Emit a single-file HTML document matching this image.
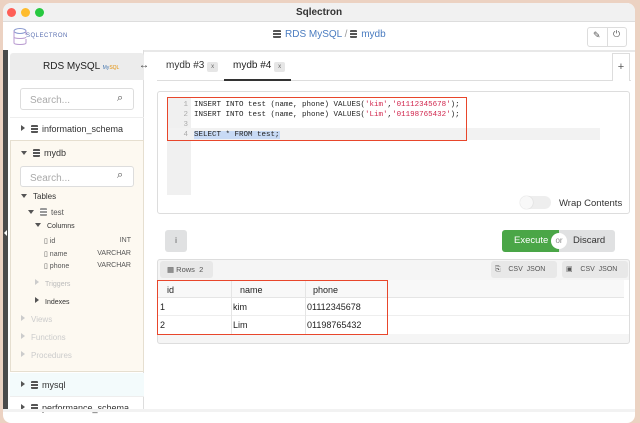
<!DOCTYPE html>
<html><head><meta charset="utf-8"><style>
*{box-sizing:border-box;margin:0;padding:0}
body{width:640px;height:412px;overflow:hidden;background:#ecd2c2;font-family:"Liberation Sans",sans-serif;position:relative;font-size:9px;color:#333}
.a{position:absolute}
.mono{font-family:"Liberation Mono",monospace}
.tri{display:inline-block;width:0;height:0;border-left:4px solid #555;border-top:3px solid transparent;border-bottom:3px solid transparent;margin-right:6px;vertical-align:1px}
.trid{display:inline-block;width:0;height:0;border-top:4px solid #555;border-left:3px solid transparent;border-right:3px solid transparent;margin-right:6px;vertical-align:1px}
.db{display:inline-block;width:7px;height:8px;border-top:2px solid #555;border-bottom:2px solid #555;background:linear-gradient(#fff 0 1px,#555 1px 3px,#fff 3px);border-radius:1px;margin-right:4px;vertical-align:-1px}
.srch{background:#fff;border:1px solid #ddd;border-radius:3px;color:#aaa;font-size:10px;padding:6px 9px}
.btn{background:#e0e1e2;border-radius:3px}
</style></head><body>
<div class="a" style="left:3px;top:3px;width:632px;height:420px;background:#fff;border-radius:8px;overflow:hidden">
 <div class="a" style="left:0;top:0;width:632px;height:19px;background:#f1f1f1;border-bottom:1px solid #ddd"></div>
 <div class="a" style="left:4px;top:5px;width:9px;height:9px;border-radius:50%;background:#fe5f57"></div>
 <div class="a" style="left:18px;top:5px;width:9px;height:9px;border-radius:50%;background:#febc2e"></div>
 <div class="a" style="left:32px;top:5px;width:9px;height:9px;border-radius:50%;background:#28c840"></div>
 <div class="a" style="left:0;top:4px;width:632px;text-align:center;font-weight:bold;font-size:10px;color:#333">Sqlectron</div>
 <div class="a" style="left:0;top:20px;width:632px;height:29px;background:#fff;border-bottom:2px solid #e8e8e8"></div>
</div>
<svg class="a" style="left:12px;top:27px" width="16" height="20"><ellipse cx="8" cy="4" rx="6" ry="2.5" fill="none" stroke="#8a9ad0"/><path d="M2 4v12M14 4v4M2 10c0 2 12 2 12 0M2 16c0 2 12 2 12 0v-4" fill="none" stroke="#b89ad0"/></svg>
<div class="a" style="left:26px;top:33px;font-size:6px;color:#5a6fb0;letter-spacing:.5px">SQLECTRON</div>
<div class="a" style="left:273px;top:29px;font-size:10px;color:#4a7cc0"><span class="db" style="width:8px"></span>RDS MySQL <span style="color:#999">/</span> <span class="db"></span>mydb</div>
<div class="a" style="left:587px;top:27px;width:40px;height:20px;border:1px solid #ddd;border-radius:3px;background:#fff"></div>
<div class="a" style="left:607px;top:27px;width:1px;height:20px;background:#ddd"></div>
<div class="a" style="left:593px;top:30px;font-size:9px;color:#555">✎</div>
<div class="a" style="left:613px;top:29px;font-size:9px;color:#555">⏻</div>
<div class="a" style="left:3px;top:50px;width:5px;height:362px;background:#4a4a4a"></div>
<div class="a" style="left:4px;top:230px;width:0;height:0;border-right:3px solid #fff;border-top:3px solid transparent;border-bottom:3px solid transparent"></div>
<div class="a" style="left:8px;top:50px;width:136px;height:362px;background:#fff;border-right:1px solid #ddd"></div>
<div class="a" style="left:10px;top:53px;width:134px;height:27px;background:#ececec;border-radius:3px 3px 0 0"></div>
<div class="a" style="left:43px;top:61px;font-size:10px;color:#222">RDS MySQL <span style="font-size:5px;color:#4b7ab0">My<span style="color:#e48e00">SQL</span></span></div>
<div class="a" style="left:139px;top:60px;font-size:10px">↔</div>
<div class="a srch" style="left:20px;top:88px;width:114px;height:22px">Search...</div>
<div class="a" style="left:117px;top:92px;font-size:11px;color:#555">⌕</div>
<div class="a" style="left:10px;top:117px;width:134px;height:23px;border-top:1px solid #eee"></div>
<div class="a" style="left:21px;top:124px;font-size:9px"><span class="tri"></span><span class="db"></span>information_schema</div>
<div class="a" style="left:10px;top:140px;width:134px;height:232px;background:#fdf9f1;border:1px solid #e6dfd0"></div>
<div class="a" style="left:21px;top:148px;font-size:9px"><span class="trid"></span><span class="db"></span>mydb</div>
<div class="a srch" style="left:20px;top:166px;width:114px;height:21px">Search...</div>
<div class="a" style="left:117px;top:169px;font-size:11px;color:#555">⌕</div>
<div class="a" style="left:21px;top:192px;font-size:8px"><span class="trid"></span>Tables</div>
<div class="a" style="left:28px;top:208px;font-size:8px;color:#555"><span class="trid"></span><span class="db" style="border-color:#999;background:linear-gradient(#fff 0 1px,#999 1px 3px,#fff 3px)"></span>test</div>
<div class="a" style="left:35px;top:223px;font-size:7px"><span class="trid"></span>Columns</div>
<div class="a" style="left:44px;top:237px;font-size:7px;color:#555;width:87px">▯ id<span style="float:right">INT</span></div>
<div class="a" style="left:44px;top:250px;font-size:7px;color:#555;width:87px">▯ name<span style="float:right">VARCHAR</span></div>
<div class="a" style="left:44px;top:262px;font-size:7px;color:#555;width:87px">▯ phone<span style="float:right">VARCHAR</span></div>
<div class="a" style="left:35px;top:279px;font-size:7px;color:#bbb"><span class="tri" style="border-left-color:#ccc"></span>Triggers</div>
<div class="a" style="left:35px;top:297px;font-size:7px"><span class="tri"></span>Indexes</div>
<div class="a" style="left:21px;top:315px;font-size:8px;color:#ccc"><span class="tri" style="border-left-color:#ccc"></span>Views</div>
<div class="a" style="left:21px;top:333px;font-size:8px;color:#ccc"><span class="tri" style="border-left-color:#ccc"></span>Functions</div>
<div class="a" style="left:21px;top:351px;font-size:8px;color:#ccc"><span class="tri" style="border-left-color:#ccc"></span>Procedures</div>
<div class="a" style="left:10px;top:373px;width:134px;height:24px;background:#f3fbfc;border-bottom:1px solid #eee"></div>
<div class="a" style="left:21px;top:380px;font-size:9px"><span class="tri"></span><span class="db"></span>mysql</div>
<div class="a" style="left:21px;top:403px;font-size:9px"><span class="tri"></span><span class="db"></span>performance_schema</div>
<div class="a" style="left:157px;top:80px;width:474px;height:1px;background:#ddd"></div>
<div class="a" style="left:166px;top:60px;font-size:10px;color:#333">mydb #3 <span style="display:inline-block;background:#e6e6e6;border-radius:2px;width:11px;height:10px;font-size:6px;text-align:center;line-height:10px;color:#666">x</span></div>
<div class="a" style="left:233px;top:60px;font-size:10px;color:#222">mydb #4 <span style="display:inline-block;background:#e6e6e6;border-radius:2px;width:11px;height:10px;font-size:6px;text-align:center;line-height:10px;color:#666">x</span></div>
<div class="a" style="left:224px;top:79px;width:67px;height:2px;background:#333"></div>
<div class="a" style="left:612px;top:53px;width:18px;height:28px;border:1px solid #ddd;border-bottom:none;background:#fff;text-align:center;line-height:26px;font-size:11px;color:#555">+</div>
<div class="a" style="left:157px;top:91px;width:473px;height:123px;border:1px solid #ddd;border-radius:3px;background:#fff"></div>
<div class="a" style="left:167px;top:97px;width:24px;height:98px;background:#f0f0f0"></div>
<div class="a" style="left:167px;top:128px;width:433px;height:12px;background:#f2f2f2"></div>
<div class="a mono" style="left:168px;top:100px;width:20px;text-align:right;font-size:7.5px;line-height:10px;color:#aaa">1<br>2<br>3<br>4</div>
<div class="a mono" style="left:194px;top:100px;font-size:7.5px;line-height:10px;color:#222;white-space:pre">INSERT INTO test (name, phone) VALUES(<span style="color:#d0234b">'kim'</span>,<span style="color:#d0234b">'01112345678'</span>);
INSERT INTO test (name, phone) VALUES(<span style="color:#d0234b">'Lim'</span>,<span style="color:#d0234b">'01198765432'</span>);

<span style="background:#c8daf5">SELECT * FROM test;</span></div>
<div class="a" style="left:167px;top:97px;width:300px;height:44px;border:1.5px solid #e8462b"></div>
<div class="a" style="left:520px;top:196px;width:31px;height:13px;border-radius:7px;background:#eee"></div>
<div class="a" style="left:520px;top:196px;width:13px;height:13px;border-radius:50%;background:#f8f8f8;box-shadow:0 0 1px #bbb"></div>
<div class="a" style="left:559px;top:198px;font-size:9.5px;color:#333">Wrap Contents</div>
<div class="a btn" style="left:165px;top:230px;width:22px;height:22px;text-align:center;line-height:22px;font-size:8px;color:#555">i</div>
<div class="a" style="left:502px;top:230px;width:60px;height:22px;background:#4aa647;border-radius:3px 0 0 3px;color:#fff;font-size:9.5px;line-height:22px;padding-left:12px">Execute</div>
<div class="a btn" style="left:559px;top:230px;width:56px;height:22px;border-radius:0 3px 3px 0;font-size:9.5px;line-height:22px;padding-left:14px;color:#333">Discard</div>
<div class="a" style="left:551px;top:233px;width:16px;height:16px;border-radius:50%;background:#fff;font-size:8px;color:#888;text-align:center;line-height:16px">or</div>
<div class="a" style="left:157px;top:259px;width:473px;height:85px;border:1px solid #ddd;border-radius:3px;background:#f5f5f5"></div>
<div class="a btn" style="left:160px;top:261px;width:53px;height:17px;background:#e8e8e8;font-size:7.5px;color:#555;line-height:17px;padding-left:7px">▦ Rows &nbsp;2</div>
<div class="a btn" style="left:491px;top:261px;width:66px;height:17px;background:#e8e8e8;font-size:7px;color:#555;line-height:17px;padding-left:4px">⎘ &nbsp;&nbsp;&nbsp;CSV &nbsp;JSON</div>
<div class="a btn" style="left:562px;top:261px;width:66px;height:17px;background:#e8e8e8;font-size:7px;color:#555;line-height:17px;padding-left:4px">▣ &nbsp;&nbsp;&nbsp;CSV &nbsp;JSON</div>
<div class="a" style="left:158px;top:280px;width:471px;height:54px;background:#fff"></div>
<div class="a" style="left:158px;top:280px;width:466px;height:18px;background:#f8f8f8;border-bottom:1px solid #e5e5e5"></div>
<div class="a" style="left:158px;top:315px;width:471px;height:1px;background:#eee"></div>
<div class="a" style="left:231px;top:280px;width:1px;height:54px;background:#e5e5e5"></div>
<div class="a" style="left:305px;top:280px;width:1px;height:54px;background:#e5e5e5"></div>
<div class="a" style="left:167px;top:285px;font-size:9px;color:#222">id</div>
<div class="a" style="left:240px;top:285px;font-size:9px;color:#222">name</div>
<div class="a" style="left:313px;top:285px;font-size:9px;color:#222">phone</div>
<div class="a" style="left:160px;top:302px;font-size:9px;color:#222">1</div>
<div class="a" style="left:233px;top:302px;font-size:9px;color:#222">kim</div>
<div class="a" style="left:307px;top:302px;font-size:9px;color:#222">01112345678</div>
<div class="a" style="left:160px;top:320px;font-size:9px;color:#222">2</div>
<div class="a" style="left:233px;top:320px;font-size:9px;color:#222">Lim</div>
<div class="a" style="left:307px;top:320px;font-size:9px;color:#222">01198765432</div>
<div class="a" style="left:157px;top:280px;width:231px;height:55px;border:1.5px solid #e8462b"></div>
<div class="a" style="left:3px;top:409px;width:632px;height:3px;background:#f2f2f2"></div>
</body></html>
